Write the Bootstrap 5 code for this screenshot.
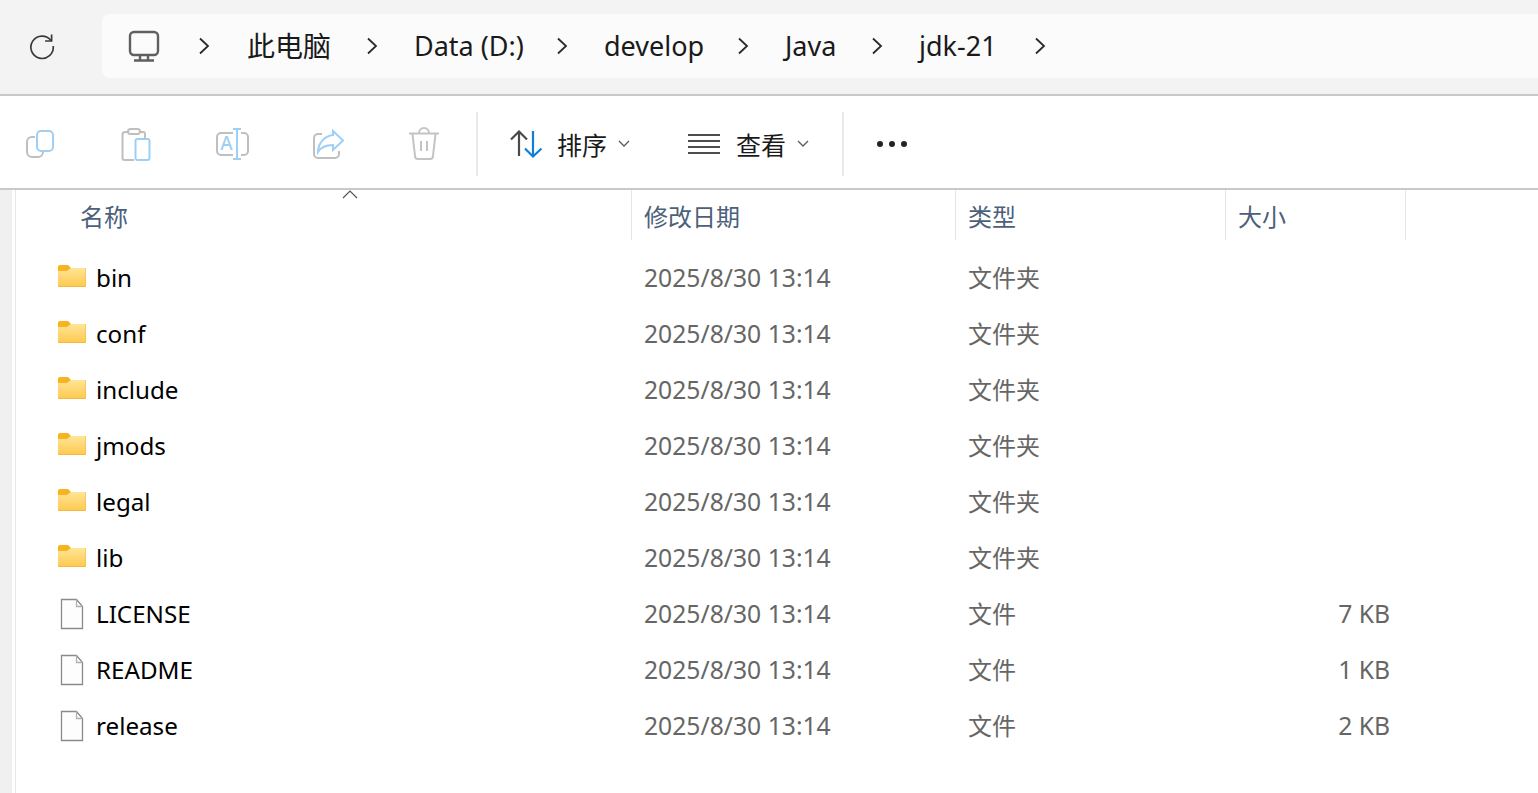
<!DOCTYPE html>
<html lang="zh-CN">
<head>
  <meta charset="UTF-8">
  <title>jdk-21</title>
  <link href="https://cdn.jsdelivr.net/npm/bootstrap@5.3.0/dist/css/bootstrap.min.css" rel="stylesheet">
  <style>
    html, body { height: 100%; }
    body { background: #fff; font-family: "Noto Sans", "Noto Sans CJK SC", sans-serif; overflow: hidden; }
    .addr-bar { height: 96px; background: #f3f3f3; border-bottom: 2px solid #c9c9c9; }
    .refresh-box { width: 102px; padding-right: 18px; margin-top: -2px; }
    .crumbs { height: 64px; margin-top: -2px; background: #fbfbfb; border-radius: 8px 0 0 8px; padding-left: 26px; font-size: 27px; color: #1a1a1a; }
    .crumb-pc { margin-right: 4px; }
    .crumb-chev { margin-left: 34px; margin-right: 36px; flex: none; }
    .crumb-text { white-space: nowrap; }
    .crumb-cjk { font-size: 28px; padding-left: 1px; }
    .tool-bar { height: 94px; border-bottom: 2px solid #c9c9c9; padding: 4px 0 0 20px; }
    .tool-group { gap: 56px; }
    .tool-sep { width: 2px; height: 64px; background: #eaeaea; margin-left: 32px; }
    .tool-label { font-size: 25px; color: #1a1a1a; line-height: 1; margin-top: 2px; }
    .sort-icon { margin-left: 32px; margin-right: 13px; }
    .view-icon { margin-left: 58px; margin-right: 16px; }
    .tool-caret { margin-left: 11px; }
    .sep-two { margin-left: 33px; }
    .more-dots { margin-left: 32px; }
    .gutter { width: 12px; background: #f0f0f0; }
    .gutter-line { width: 4px; border-right: 1px solid #e8e8e8; }
    .file-pane { height: 603px; }
    .list-area { position: relative; }
    .col-name { width: 616px; }
    .col-date { width: 324px; }
    .col-type { width: 270px; }
    .col-size { width: 180px; }
    .head-row { height: 60px; color: #4c607a; font-size: 24px; }
    .head-cell { height: 50px; padding: 4px 0 0 12px; border-right: 1px solid #e5e5e5; }
    .head-cell.col-name { padding-left: 64px; }
    .sort-caret { position: absolute; left: 326px; top: 0; }
    .file-row { height: 56px; font-size: 24.7px; color: #666; }
    .file-name { color: #000; padding-left: 42px; gap: 10px; font-size: 24.2px; }
    .file-cell { padding-left: 12px; }
    .file-type { font-size: 24px; }
    .file-size { padding-right: 16px; text-align: right; }
    .row-icon { width: 28px; flex: none; }
    .folder-icon { margin-top: -4px; }
  </style>
</head>
<body>

  <!-- address bar -->
  <div class="addr-bar d-flex align-items-center">
    <div class="refresh-box d-flex justify-content-center">
      <svg width="28" height="28" viewBox="0 0 28 28" fill="none" stroke="#3a3a3a" stroke-width="1.700">
        <path d="M23 8.500A11.200 11.200 0 1 0 25.200 14"/>
        <path d="M23.600 2.500V9h-6.500"/>
      </svg>
    </div>
    <div class="crumbs flex-grow-1 d-flex align-items-center" id="crumbs">
      <svg class="crumb-pc" width="32" height="32" viewBox="0 0 32 32" fill="none" stroke="#5f5f5f" stroke-width="2.400">
        <rect x="2" y="2" width="28" height="23" rx="4"/>
        <path d="M12 25v5M20 25v5M6 30.500h20"/>
      </svg>
    </div>
  </div>

  <!-- command bar -->
  <div class="tool-bar d-flex align-items-center">
    <div class="tool-group d-flex">
      <svg width="40" height="40" viewBox="0 0 40 40" fill="none" stroke-width="2">
        <path stroke="#bfbfbf" d="M15 13h-3a5 5 0 0 0-5 5v10a5 5 0 0 0 5 5h6a5 5 0 0 0 5-5"/>
        <rect stroke="#9fcff5" x="17" y="7" width="16" height="20" rx="4"/>
      </svg>
      <svg width="40" height="40" viewBox="0 0 40 40" fill="none" stroke-width="2">
        <path stroke="#bfbfbf" d="M12 8H9a2.500 2.500 0 0 0-2.500 2.500V34a2 2 0 0 0 2 2H18M24 8h3a2 2 0 0 1 2 2v4"/>
        <rect stroke="#bfbfbf" x="12" y="5" width="12" height="5" rx="2.500"/>
        <rect stroke="#9fcff5" x="19.500" y="15" width="14" height="21" rx="2"/>
      </svg>
      <svg width="40" height="40" viewBox="0 0 40 40" fill="none" stroke-width="2">
        <path stroke="#bfbfbf" d="M21 9H9a4 4 0 0 0-4 4v14a4 4 0 0 0 4 4h12M29 9h3a4 4 0 0 1 4 4v14a4 4 0 0 1-4 4h-3"/>
        <path stroke="#9fcff5" d="M25 5v30M21 5h8M21 35h8"/>
        <text x="14.500" y="26" text-anchor="middle" font-size="19" font-weight="500" fill="#9fcff5" stroke="none" font-family="Noto Sans, sans-serif">A</text>
      </svg>
      <svg width="40" height="40" viewBox="0 0 40 40" fill="none" stroke-width="2">
        <path stroke="#bfbfbf" d="M14 10h-4a4 4 0 0 0-4 4v16a4 4 0 0 0 4 4h17a4 4 0 0 0 4-4v-3"/>
        <path stroke="#9fcff5" d="M25 7l10 9.500L25 26v-5c-7 0-12 2-15 7 0-8 6-16 15-17z"/>
      </svg>
      <svg width="40" height="40" viewBox="0 0 40 40" fill="none" stroke="#c4c4c4" stroke-width="2">
        <path d="M5 9.500h30M8.500 10l2.500 22a3 3 0 0 0 3 3h12a3 3 0 0 0 3-3l2.500-22M15 9a5 5 0 0 1 10 0M17 17v10M23 17v10"/>
      </svg>
    </div>

    <div class="tool-sep"></div>

    <svg class="sort-icon" width="34" height="28" viewBox="0 0 34 28" fill="none" stroke-width="2.200">
      <path stroke="#4a4a4a" d="M9 1.500V26M1 9.500l8-8 8 8"/>
      <path stroke="#0f7fd9" d="M23 1v25M15 18.500l8 8 8.500-8"/>
    </svg>
    <span class="tool-label">排序</span>
    <svg class="tool-caret" width="12" height="8" viewBox="0 0 12 8" fill="none" stroke="#5a5a5a" stroke-width="1.300"><path d="M1 1l5 5 5-5"/></svg>

    <svg class="view-icon" width="32" height="20" viewBox="0 0 32 20" fill="none" stroke="#4d4d4d" stroke-width="2"><path d="M0 1h32M0 7h32M0 13h32M0 19h32"/></svg>
    <span class="tool-label">查看</span>
    <svg class="tool-caret" width="12" height="8" viewBox="0 0 12 8" fill="none" stroke="#5a5a5a" stroke-width="1.300"><path d="M1 1l5 5 5-5"/></svg>

    <div class="tool-sep sep-two"></div>
    <svg class="more-dots" width="34" height="8" viewBox="0 0 34 8" fill="#222"><circle cx="4" cy="4" r="3"/><circle cx="16" cy="4" r="3"/><circle cx="28" cy="4" r="3"/></svg>
  </div>

  <!-- file list -->
  <div class="file-pane d-flex">
    <div class="gutter"></div>
    <div class="gutter-line"></div>
    <div class="list-area flex-grow-1">
      <svg class="sort-caret" width="16" height="9" viewBox="0 0 16 9" fill="none" stroke="#555" stroke-width="1.200"><path d="M1 8l7-7 7 7"/></svg>
      <div class="head-row d-flex">
        <div class="head-cell col-name d-flex align-items-center">名称</div>
        <div class="head-cell col-date d-flex align-items-center">修改日期</div>
        <div class="head-cell col-type d-flex align-items-center">类型</div>
        <div class="head-cell col-size d-flex align-items-center">大小</div>
      </div>
      <div id="fileRows"></div>
    </div>
  </div>

  <script>
    // widths keep each crumb on the same column as the reference font
    const crumbs = [
      { text: '此电脑', width: 86, cjk: true },
      { text: 'Data (D:)', width: 108 },
      { text: 'develop', width: 99 },
      { text: 'Java', width: 52 },
      { text: 'jdk-21', width: 81 }
    ];
    const files = [
      ['bin', 'd'], ['conf', 'd'], ['include', 'd'], ['jmods', 'd'], ['legal', 'd'], ['lib', 'd'],
      ['LICENSE', 'f', '7 KB'], ['README', 'f', '1 KB'], ['release', 'f', '2 KB']
    ];

    const chevron = '<svg class="crumb-chev" width="12" height="18" viewBox="0 0 12 18" fill="none" stroke="#2a2a2a" stroke-width="1.800"><path d="M2 1.500l8 7.500-8 7.500"/></svg>';
    const folderIcon = `<svg class="row-icon folder-icon" height="22" viewBox="0 0 28 22">
      <defs><linearGradient id="fg" x1="0" y1="0" x2="0" y2="1"><stop offset="0" stop-color="#ffe596"/><stop offset="1" stop-color="#fcca52"/></linearGradient></defs>
      <path fill="#f5b420" d="M0 2a2 2 0 0 1 2-2h7a2 2 0 0 1 2 1l2 2h14a1 1 0 0 1 1 1v6H0z"/>
      <path fill="#f2b93a" d="M0 6h9l4-3h14a1 1 0 0 1 1 1v17a1 1 0 0 1-1 1H1a1 1 0 0 1-1-1z"/>
      <path fill="url(#fg)" d="M0 6h9l4-3h14a1 1 0 0 1 .500 .500V20.500a.500 .500 0 0 1-.500 .500H1a1 1 0 0 1-1-1z"/>
    </svg>`;
    const fileIcon = `<svg class="row-icon" height="32" viewBox="0 0 28 32" fill="#fdfdfd" stroke="#8a8a8a" stroke-width="1.300">
      <path d="M3.500 1.500h15l6 7v22h-21z"/><path fill="none" stroke="#b0b0b0" d="M18.500 1.500v7h6"/>
    </svg>`;

    document.getElementById('crumbs').insertAdjacentHTML('beforeend',
      chevron + crumbs.map(c =>
        `<span class="crumb-text${c.cjk ? ' crumb-cjk' : ''}" style="width:${c.width}px">${c.text}</span>${chevron}`
      ).join(''));

    document.getElementById('fileRows').innerHTML = files.map(f => `
      <div class="file-row d-flex align-items-center">
        <div class="col-name file-name d-flex align-items-center">${f[1] === 'd' ? folderIcon : fileIcon}<span>${f[0]}</span></div>
        <div class="col-date file-cell">2025/8/30 13:14</div>
        <div class="col-type file-cell file-type">${f[1] === 'd' ? '文件夹' : '文件'}</div>
        <div class="col-size file-size">${f[2] || ''}</div>
      </div>`).join('');
  </script>
  <script src="https://cdn.jsdelivr.net/npm/bootstrap@5.3.0/dist/js/bootstrap.bundle.min.js"></script>
</body>
</html>
